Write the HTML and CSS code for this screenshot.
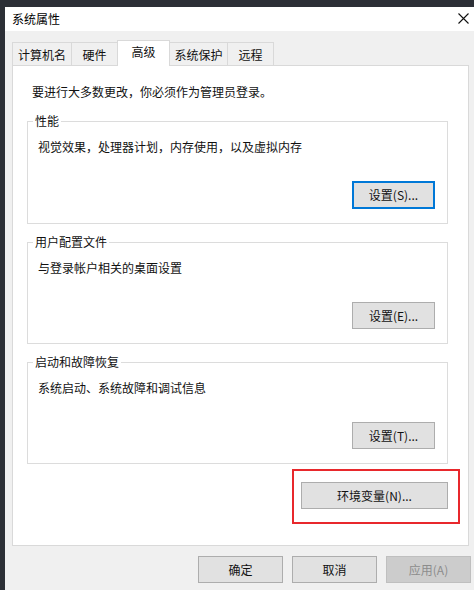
FILE: index.html
```html
<!DOCTYPE html>
<html lang="zh-CN">
<head>
<meta charset="utf-8">
<title>系统属性</title>
<link rel="stylesheet" href="styles.css">
</head>
<body>
<div class="window">
  <div class="titlebar">
    <span class="title">系统属性</span>
    <svg class="close" width="11" height="11" viewBox="0 0 11 11"><path d="M0.5 0.5 L10.5 10.5 M10.5 0.5 L0.5 10.5" stroke="#111" stroke-width="1.1" fill="none"/></svg>
  </div>
  <div class="body">
    <div class="tabs">
      <div class="tab tab-name">计算机名</div>
      <div class="tab tab-hw">硬件</div>
      <div class="tab tab-adv active">高级</div>
      <div class="tab tab-prot">系统保护</div>
      <div class="tab tab-remote">远程</div>
    </div>
    <div class="panel">
      <p class="note">要进行大多数更改，你必须作为管理员登录。</p>
      <fieldset class="group">
        <legend>性能</legend>
        <p class="desc">视觉效果，处理器计划，内存使用，以及虚拟内存</p>
        <button class="btn set focus">设置(S)...</button>
      </fieldset>
      <fieldset class="group">
        <legend>用户配置文件</legend>
        <p class="desc">与登录帐户相关的桌面设置</p>
        <button class="btn set">设置(E)...</button>
      </fieldset>
      <fieldset class="group">
        <legend>启动和故障恢复</legend>
        <p class="desc">系统启动、系统故障和调试信息</p>
        <button class="btn set">设置(T)...</button>
      </fieldset>
      <div class="highlight">
        <button class="btn env">环境变量(N)...</button>
      </div>
    </div>
    <div class="footer">
      <button class="btn foot">确定</button>
      <button class="btn foot">取消</button>
      <button class="btn foot disabled">应用(A)</button>
    </div>
  </div>
</div>
</body>
</html>
```
FILE: styles.css
```css
* { box-sizing: border-box; }
html, body { margin: 0; padding: 0; }
body {
  background: #2c2f36;
  width: 474px;
  height: 590px;
  overflow: hidden;
  font-family: "Noto Sans CJK SC", "Microsoft YaHei", sans-serif;
  font-size: 12px;
  color: #111;
}
.window {
  margin: 7px 0 0 5px;
  height: 583px;
  background: #f0f0f0;
  display: flex;
  flex-direction: column;
}
.titlebar {
  height: 24px;
  background: #fff;
  display: flex;
  align-items: center;
  justify-content: space-between;
  padding: 0 5px 0 7px;
}
.title { line-height: 16px; color: #000; }
.close { display: block; margin-top: -1px; }
.body {
  padding: 9px 5px 0 7px;
  display: flex;
  flex-direction: column;
}
.tabs {
  display: flex;
  align-items: flex-end;
  height: 25px;
  position: relative;
  z-index: 1;
}
.tab {
  height: 23px;
  border: 1px solid #d9d9d9;
  border-bottom: none;
  background: #f0f0f0;
  display: flex;
  align-items: center;
  justify-content: center;
  line-height: 16px;
  padding-top: 1px;
  margin-left: -1px;
}
.tab-name { width: 60px; margin-left: 0; }
.tab-hw { width: 47px; }
.tab-adv { width: 53px; }
.tab-prot { width: 59px; }
.tab-remote { width: 47px; }
.tab.active {
  height: 26px;
  margin-bottom: -1px;
  background: #fff;
  padding-top: 0;
  padding-bottom: 3px;
  position: relative;
}
.panel {
  background: #fff;
  border: 1px solid #d9d9d9;
  padding: 18px 0 21px 14px;
  display: flex;
  flex-direction: column;
}
.note {
  margin: 0 0 13px 5px;
  line-height: 16px;
}
.group {
  width: 421px;
  margin: 0 0 10px 0;
  padding: 10px 12px 14px 10px;
  border: 1px solid #dcdcdc;
  display: flex;
  flex-direction: column;
}
.group legend {
  margin-left: -5px;
  padding: 0 2px;
  line-height: 16px;
}
.desc {
  margin: 0;
  line-height: 16px;
}
.btn {
  font-family: inherit;
  font-size: 12px;
  color: #111;
  background: #e1e1e1;
  border: 1px solid #adadad;
  height: 27px;
  padding: 0;
  line-height: 16px;
}
.set {
  width: 83px;
  margin-top: 26px;
  align-self: flex-end;
}
.set.focus {
  border: 2px solid #0078d7;
  height: 28px;
}
.highlight {
  align-self: flex-end;
  margin: -5px 8px 0 0;
  border: 2px solid #e8282c;
  padding: 11px 10px 13px 7px;
}
.env { width: 147px; display: block; }
.footer {
  display: flex;
  justify-content: flex-end;
  gap: 9px;
  padding-top: 10px;
  margin-right: -2px;
}
.foot { width: 85px; }
.foot.disabled {
  background: #cccccc;
  border-color: #bfbfbf;
  color: #8c8c8c;
}
```
